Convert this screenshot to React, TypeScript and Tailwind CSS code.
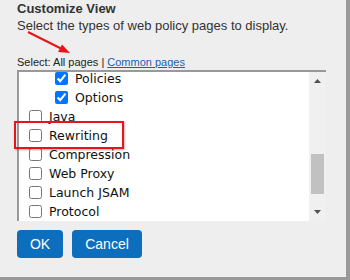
import React from "react";

type Item = { label: string; checked?: boolean; indent?: boolean };

const items: Item[] = [
  { label: "Policies", checked: true, indent: true },
  { label: "Options", checked: true, indent: true },
  { label: "Java" },
  { label: "Rewriting" },
  { label: "Compression" },
  { label: "Web Proxy" },
  { label: "Launch JSAM" },
  { label: "Protocol" },
];

export default function App() {
  return (
    <div className="relative w-[350px] h-[280px] overflow-hidden bg-[#eeeeee] border-r-4 border-b-[3px] border-[#999999] text-[#222222] font-['Liberation_Sans',Arial,sans-serif]">
      <div className="pl-[17px] pt-[1px] flex flex-col">
        <div className="font-bold text-[13px] leading-[15px] text-[#333333]">Customize View</div>
        <div className="mt-[2px] text-[13px] leading-[15px] text-[#333333]">
          Select the types of web policy pages to display.
        </div>
        <div className="mt-[23px] text-[11px] leading-[13px] text-[#222222]">
          Select: All pages |{" "}
          <span className="text-[#1a5fb4] underline">Common pages</span>
        </div>
        <div className="mt-[1px] w-[309px] h-[151px] flex border-t-2 border-l-2 border-[#999999] bg-white overflow-hidden">
          <div className="flex-1 overflow-hidden">
            <div className="flex flex-col -mt-[3px] font-['DejaVu_Sans',Verdana,sans-serif] text-[12.5px] text-[#111111]">
              {items.map((it) => (
                <label
                  key={it.label}
                  className={`flex items-center h-[19px] gap-[7px] ${it.indent ? "pl-[36px]" : "pl-[10px]"}`}
                >
                  <input
                    type="checkbox"
                    defaultChecked={it.checked}
                    className="m-0 w-[13px] h-[13px]"
                  />
                  <span className="leading-[13px]">{it.label}</span>
                </label>
              ))}
            </div>
          </div>
          <div className="w-[17px] h-full bg-[#f0f0f0] flex flex-col items-center">
            <svg width="17" height="17" viewBox="0 0 17 17" className="shrink-0">
              <path d="M5 11 L8.5 7 L12 11 Z" fill="#505050" />
            </svg>
            <div className="mt-[65px] w-[13px] h-[40px] bg-[#c1c1c1]" />
            <div className="flex-1" />
            <svg width="17" height="17" viewBox="0 0 17 17" className="shrink-0 mb-[1px]">
              <path d="M5 7 L12 7 L8.5 11 Z" fill="#505050" />
            </svg>
          </div>
        </div>
        <div className="mt-[9px] flex gap-[9px]">
          <button className="w-[46px] h-[28px] rounded-[4px] bg-[#0d6ebd] text-white text-[14px] font-['Liberation_Sans',Arial,sans-serif]">
            OK
          </button>
          <button className="w-[70px] h-[28px] rounded-[4px] bg-[#0d6ebd] text-white text-[14px] font-['Liberation_Sans',Arial,sans-serif]">
            Cancel
          </button>
        </div>
      </div>

      {/* red annotation box */}
      <div className="absolute left-[14px] top-[121px] w-[110px] h-[28px] border-2 border-[#e8141b] shadow-[1px_1px_2px_rgba(0,0,0,0.3)]" />

      {/* red arrow */}
      <svg className="absolute left-0 top-0" width="100" height="70" viewBox="0 0 100 70">
        <line x1="28" y1="32" x2="62" y2="49" stroke="#e8141b" strokeWidth="2" />
        <path d="M70 53 L58 52 L62 44.5 Z" fill="#e8141b" />
      </svg>
    </div>
  );
}
